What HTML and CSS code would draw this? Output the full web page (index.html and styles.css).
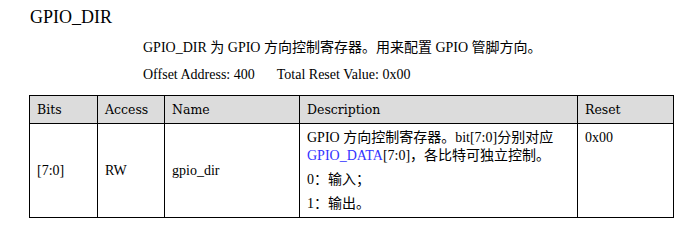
FILE: index.html
```html
<!DOCTYPE html>
<html lang="zh">
<head>
<meta charset="utf-8">
<link rel="stylesheet" href="styles.css">
</head>
<body>
<div class="page">
  <h1 class="title">GPIO_DIR</h1>
  <p class="intro">GPIO_DIR 为 GPIO 方向控制寄存器。用来配置 GPIO 管脚方向。</p>
  <p class="meta"><span class="offset">Offset Address: 400</span><span>Total Reset Value: 0x00</span></p>
  <table class="reg">
    <colgroup>
      <col class="c-bits"><col class="c-acc"><col class="c-name"><col class="c-desc"><col class="c-reset">
    </colgroup>
    <thead>
      <tr><th>Bits</th><th>Access</th><th>Name</th><th>Description</th><th>Reset</th></tr>
    </thead>
    <tbody>
      <tr>
        <td class="mid">[7:0]</td>
        <td class="mid">RW</td>
        <td class="mid">gpio_dir</td>
        <td class="desc">
          <div class="para">
            <div class="line">GPIO 方向控制寄存器。bit[7:0]分别对应</div>
            <div class="line"><span class="link">GPIO_DATA</span>[7:0]，各比特可独立控制。</div>
          </div>
          <div class="para"><div class="line">0：输入；</div></div>
          <div class="para"><div class="line">1：输出。</div></div>
        </td>
        <td class="top">0x00</td>
      </tr>
    </tbody>
  </table>
</div>
</body>
</html>
```
FILE: styles.css
```css
html, body {
  margin: 0;
  padding: 0;
  background: #ffffff;
}
body {
  font-family: "Liberation Serif", "Noto Sans CJK SC", serif;
  color: #000;
}
.page {
  padding: 6px 0 0 30px;
}
.title {
  margin: 0;
  font-size: 18px;
  font-weight: normal;
  line-height: 22px;
}
.intro {
  margin: 12px 0 0 113px;
  font-size: 14px;
  line-height: 16px;
}
.meta {
  margin: 11px 0 0 113px;
  font-size: 14px;
  line-height: 16px;
}
.offset {
  margin-right: 22px;
}
.reg {
  margin: 12px 0 0 -1px;
  border-collapse: collapse;
  table-layout: fixed;
  width: 644px;
  font-size: 14px;
}
.c-bits { width: 68px; }
.c-acc { width: 67px; }
.c-name { width: 135px; }
.c-desc { width: 278px; }
.c-reset { width: 96px; }
.reg th, .reg td {
  border: 1px solid #000;
  text-align: left;
  padding: 0 7px;
}
.reg th {
  background: #dcdcdc;
  font-weight: normal;
  height: 27px;
  font-family: "DejaVu Serif", "Liberation Serif", serif;
  font-size: 12.5px;
}
.reg td {
  height: 94px;
  box-sizing: border-box;
}
.reg td.mid {
  vertical-align: middle;
}
.reg td.top {
  vertical-align: top;
  padding-top: 6px;
}
.reg td.desc {
  vertical-align: top;
  padding-top: 5px;
}
.line {
  height: 18px;
  line-height: 18px;
  white-space: nowrap;
  overflow: visible;
}
.para {
  margin-bottom: 6px;
}
.para:last-child {
  margin-bottom: 0;
}
.link {
  color: #3333ff;
}
```
